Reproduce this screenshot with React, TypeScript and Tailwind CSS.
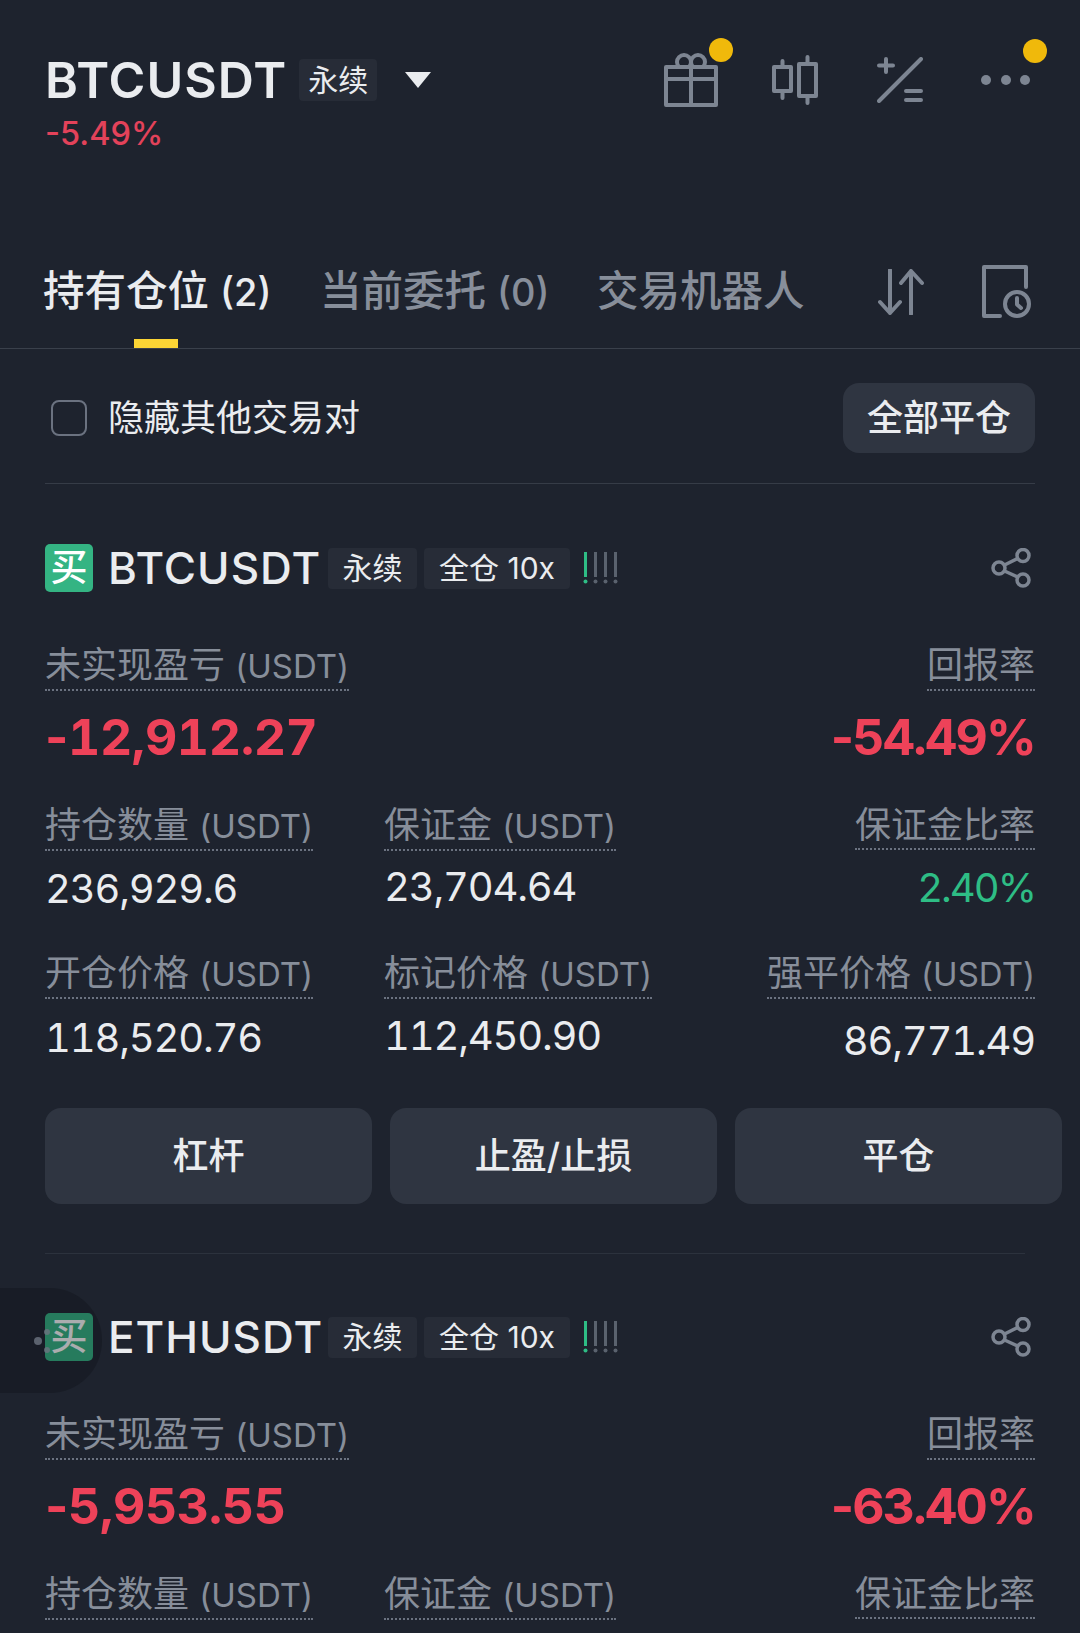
import React from "react";

const FF = "font-['Inter','Noto_Sans_CJK_SC',sans-serif]";

function Gift() {
  return (
    <svg width="54" height="54" viewBox="0 0 54 54" fill="none" stroke="#7d8592" strokeWidth="4" strokeLinejoin="round">
      <circle cx="20" cy="9" r="7" />
      <circle cx="34" cy="9" r="7" />
      <rect x="2" y="14" width="50" height="38" fill="#1e232e" />
      <path d="M2 26H52M27 14V52" />
    </svg>
  );
}
function Candles() {
  return (
    <svg width="46" height="50" viewBox="0 0 46 50" fill="none" stroke="#7d8592" strokeWidth="4" strokeLinecap="round" strokeLinejoin="round">
      <rect x="2" y="12" width="17" height="24" />
      <path d="M10.5 6V12M10.5 36V43" />
      <rect x="27" y="9" width="17" height="32" />
      <path d="M35.5 2V9M35.5 41V48" />
    </svg>
  );
}
function PlusMinus() {
  return (
    <svg width="46" height="46" viewBox="0 0 46 46" fill="none" stroke="#7d8592" strokeWidth="4" strokeLinecap="round">
      <path d="M44 2L2 44" />
      <path d="M9 2V15M2 8.500H16" />
      <path d="M29 34H44M29 43H44" />
    </svg>
  );
}
function SortIcon() {
  return (
    <svg width="46" height="46" viewBox="0 0 46 46" fill="none" stroke="#7d8592" strokeWidth="4" strokeLinecap="round" strokeLinejoin="round">
      <path d="M12 1V44M2 33L12 44L22 33" />
      <path d="M33 45V2M23 14L33 2L44 14" />
    </svg>
  );
}
function DocClock() {
  return (
    <svg width="50" height="54" viewBox="0 0 50 54" fill="none" stroke="#7d8592" strokeWidth="4" strokeLinecap="round" strokeLinejoin="round">
      <path d="M18 51H2V2H44V22" />
      <circle cx="35" cy="39" r="12" />
      <path d="M35 33V39.500L39 43" />
    </svg>
  );
}
function Share() {
  return (
    <svg width="40" height="40" viewBox="0 0 40 40" fill="none" stroke="#7d8592" strokeWidth="3.500">
      <circle cx="8" cy="20" r="6" />
      <circle cx="32" cy="7.500" r="6" />
      <circle cx="32" cy="32" r="6" />
      <path d="M13.500 17L26.500 10.500M13.500 23L26.500 29" />
    </svg>
  );
}
function Bars() {
  return (
    <svg width="36" height="32" viewBox="0 0 36 32" className="ml-[13px]">
      <rect x="1" y="0" width="3" height="25" fill="#2ebd85" />
      <circle cx="2.500" cy="29.500" r="2" fill="#2ebd85" />
      {[11, 21, 31].map((x) => (
        <g key={x}>
          <rect x={x} y="0" width="3" height="25" fill="#5a626e" />
          <circle cx={x + 1.5} cy="29.500" r="2" fill="#5a626e" />
        </g>
      ))}
    </svg>
  );
}

function Label({ children, right }: { children: React.ReactNode; right?: boolean }) {
  return (
    <div className={"flex " + (right ? "justify-end" : "justify-start")}>
      <span className="border-b-2 border-dotted border-[#6b7280] text-[#878e9a] text-[36px] leading-[44px] pb-px whitespace-nowrap">
        {children}
      </span>
    </div>
  );
}

function U({ a }: { a: string }) {
  return (
    <>
      {a} <span className="text-[33px]">(USDT)</span>
    </>
  );
}

function Tag({ children, w }: { children: React.ReactNode; w: string }) {
  return (
    <span className={"flex h-[41px] items-center justify-center rounded-[4px] bg-[#272c37] text-[#eaecef] text-[30px] whitespace-nowrap " + w}>
      {children}
    </span>
  );
}

function CardHead({ sym }: { sym: string }) {
  return (
    <div className="flex items-center h-[48px] pr-[4px]">
      <div className="flex h-[48px] w-[48px] items-center justify-center rounded-[5px] bg-[#34b483] text-[37px] font-medium text-white">
        买
      </div>
      <span className="ml-[15px] w-[225px] text-[44px] font-medium text-[#eaecef] leading-none tracking-[1px] whitespace-nowrap">{sym}</span>
      <Tag w="w-[89px] ml-[-5px]">永续</Tag>
      <Tag w="w-[146px] ml-[7px]">
        全仓&nbsp;<span className="text-[30px]">10x</span>
      </Tag>
      <Bars />
      <div className="ml-auto">
        <Share />
      </div>
    </div>
  );
}

function Signed({ v }: { v: string }) {
  return (
    <>
      <span className="[font-variant-numeric:normal]">{v[0]}</span>
      {v.slice(1)}
    </>
  );
}

function PnL({ value, roe }: { value: string; roe: string }) {
  return (
    <>
      <div className="mt-[51px] flex justify-between">
        <Label><U a="未实现盈亏" /></Label>
        <Label right>回报率</Label>
      </div>
      <div className="mt-[16px] flex justify-between text-[50px] font-bold leading-[60px] tabular-nums text-[#ee4259]">
        <span className="tracking-[-0.4px]"><Signed v={value} /></span>
        <span className="tracking-[-1.8px]"><Signed v={roe} /></span>
      </div>
    </>
  );
}

function Stat({ label, value, right, green, mt = "mt-[14px]" }: { label: React.ReactNode; value?: string; right?: boolean; green?: boolean; mt?: string }) {
  return (
    <div className={right ? "text-right" : ""}>
      <Label right={right}>{label}</Label>
      {value && (
        <div className={mt + " text-[40px] leading-[48px] tabular-nums " + (green ? "text-[#2ebd85] tracking-[-2px]" : "text-[#eaecef] tracking-[-1.2px]")}>{value}</div>
      )}
    </div>
  );
}

const Grid = ({ children, className = "" }: { children: React.ReactNode; className?: string }) => (
  <div className={"grid grid-cols-[339px_1fr_auto] " + className}>{children}</div>
);

function Btn({ children }: { children: React.ReactNode }) {
  return (
    <button className="flex h-[96px] w-[327px] items-center justify-center rounded-[16px] bg-[#2f3541] text-[36px] font-medium text-[#eaecef]">
      {children}
    </button>
  );
}

export default function App() {
  return (
    <div className={"relative h-[1633px] w-[1080px] overflow-hidden bg-[#1e232e] " + FF}>
      {/* Top bar */}
      <div className="flex h-[212px] items-start justify-between pl-[45px] pr-[50px] pt-[50px]">
        <div>
          <div className="flex h-[60px] items-center">
            <span className="text-[50px] font-semibold leading-none text-[#eaecef] tracking-[1px]">BTCUSDT</span>
            <span className="ml-[12px] flex h-[42px] w-[78px] items-center justify-center rounded-[4px] bg-[#272c37] text-[30px] text-[#eaecef]">永续</span>
            <svg width="28" height="18" viewBox="0 0 28 18" className="ml-[27px]">
              <path d="M1 1H27L14 17Z" fill="#eaecef" />
            </svg>
          </div>
          <div className="mt-[4px] text-[32.5px] font-medium leading-[40px] text-[#e3425a]">-5.49%</div>
        </div>
        <div className="relative flex items-center pt-[3px]">
          <div className="relative"><Gift /><span className="absolute right-[-15px] top-[-15px] h-[24px] w-[24px] rounded-full bg-[#f0b90b]" /></div>
          <div className="ml-[54px]"><Candles /></div>
          <div className="ml-[59px]"><PlusMinus /></div>
          <div className="relative ml-[58px] flex w-[49px] justify-between">
            <span className="h-[10px] w-[10px] rounded-full bg-[#7d8592]" />
            <span className="h-[10px] w-[10px] rounded-full bg-[#7d8592]" />
            <span className="h-[10px] w-[10px] rounded-full bg-[#7d8592]" />
            <span className="absolute right-[-17px] top-[-36px] h-[24px] w-[24px] rounded-full bg-[#f0b90b]" />
          </div>
        </div>
      </div>

      {/* Tabs */}
      <div className="relative flex h-[137px] items-start border-b border-[#3a404b] pl-[43px] pt-[51px] text-[41.5px] leading-[56px]">
        <div className="relative font-medium text-[#eaecef] whitespace-nowrap w-[277px]">
          持有仓位 <span className="text-[38px]">(2)</span>
          <span className="absolute left-[91px] top-[76px] h-[9px] w-[44px] bg-[#fcd535]" />
        </div>
        <div className="text-[#878e9a] font-medium whitespace-nowrap w-[277px]">当前委托 <span className="text-[38px]">(0)</span></div>
        <div className="text-[#878e9a] font-medium whitespace-nowrap">交易机器人</div>
        <div className="absolute left-[878px] top-[57px]"><SortIcon /></div>
        <div className="absolute left-[982px] top-[53px]"><DocClock /></div>
      </div>

      <div className="px-[45px]">
        {/* Filter row */}
        <div className="flex h-[135px] items-center border-b border-[#363c47] pt-[3px]">
          <span className="ml-[6px] h-[36px] w-[36px] rounded-[8px] border-2 border-[#6b7280]" />
          <span className="ml-[21px] text-[36px] text-[#eaecef]">隐藏其他交易对</span>
          <button className="ml-auto h-[70px] w-[192px] rounded-[16px] bg-[#2f3541] text-[36px] font-medium text-[#eaecef]">全部平仓</button>
        </div>

        {/* Card 1 */}
        <div className="pt-[60px]">
          <CardHead sym="BTCUSDT" />
          <PnL value="-12,912.27" roe="-54.49%" />
          <Grid className="mt-[36px]">
            <Stat label={<U a="持仓数量" />} value="236,929.6" />
            <Stat label={<U a="保证金" />} value="23,704.64" mt="mt-[12px]" />
            <Stat right label="保证金比率" value="2.40%" green />
          </Grid>
          <Grid className="mt-[38px]">
            <Stat label={<U a="开仓价格" />} value="118,520.76" mt="mt-[15px]" />
            <Stat label={<U a="标记价格" />} value="112,450.90" mt="mt-[13px]" />
            <Stat right label={<U a="强平价格" />} value="86,771.49" mt="mt-[18px]" />
          </Grid>
          <div className="mt-[43px] flex w-[1017px] justify-between">
            <Btn>杠杆</Btn>
            <Btn>止盈/止损</Btn>
            <Btn>平仓</Btn>
          </div>
          <div className="mt-[49px] h-px w-[980px] bg-[#2c323d]" />
        </div>

        {/* Card 2 */}
        <div className="pt-[59px]">
          <CardHead sym="ETHUSDT" />
          <PnL value="-5,953.55" roe="-63.40%" />
          <Grid className="mt-[36px]">
            <Stat label={<U a="持仓数量" />} />
            <Stat label={<U a="保证金" />} />
            <Stat right label="保证金比率" />
          </Grid>
        </div>
      </div>

      {/* Floating handle */}
      <div className="absolute left-0 top-[1288px] flex h-[105px] w-[102px] items-center rounded-r-[52px] bg-[#0d1017]/35 pl-[33px]">
        <svg width="22" height="40" viewBox="0 0 22 40" fill="#6c7480" opacity="0.8">
          <circle cx="5" cy="20" r="4" />
          <circle cx="14" cy="11" r="3" />
          <circle cx="14" cy="29" r="3" />
        </svg>
      </div>
    </div>
  );
}
